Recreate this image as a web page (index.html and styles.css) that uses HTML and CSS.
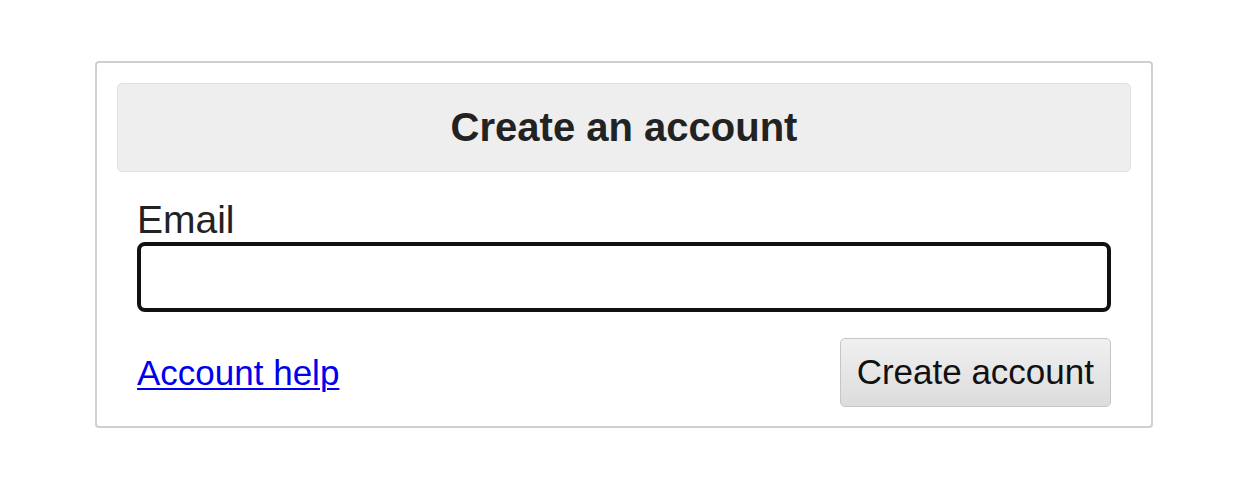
FILE: index.html
```html
<!DOCTYPE html>
<html lang="en">

<head>
    <meta charset="UTF-8">
    <meta name="viewport" content="width=device-width, initial-scale=1.0">
    <title>Create an account</title>
    <link rel="stylesheet" href="styles.css">
</head>

<body>

    <div class="signup-container">
        <h2 class="signup-title">Create an account</h2>
        <form id="signupForm" class="signup-form" action="javascript:void(0);">
            <label for="email">Email</label>
            <input type="email" id="email" name="email" required>

            <div class="form-footer">
                <a href="#" class="help-link">Account help</a>
                <button type="submit">Create account</button>
            </div>
        </form>
    </div>

</body>

</html>
```

FILE: styles.css
```css
body {
    font-family: Arial, "Liberation Sans", sans-serif;
    background-color: #fff;
    display: flex;
    justify-content: center;
    align-items: flex-start;
    margin: 0;
    padding: 61px 0 0 2px;
    color: #222;
}

.signup-container {
    width: 1058px;
    box-sizing: border-box;
    padding: 20px;
    border: 2px solid #cfcfcf;
    border-radius: 4px;
    background-color: #fff;
}

.signup-title {
    margin: 0;
    padding: 20px 20px 21px;
    background-color: #eee;
    border: 1px solid #e0e0e0;
    border-radius: 5px;
    text-align: center;
    font-size: 40px;
    line-height: 46px;
    font-weight: bold;
    color: #222;
}

.signup-form {
    display: flex;
    flex-direction: column;
    padding: 26px 20px 0;
}

label {
    font-size: 39px;
    line-height: 44px;
    color: #222;
}

input[type="email"] {
    width: 100%;
    height: 70px;
    margin: 0;
    padding: 10px;
    border: 4px solid #111;
    border-radius: 8px;
    box-sizing: border-box;
    font-size: 30px;
    outline: none;
}

.form-footer {
    display: flex;
    justify-content: space-between;
    align-items: center;
    margin-top: 26px;
    margin-bottom: -1px;
}

.help-link {
    font-size: 35px;
    line-height: 40px;
    color: #0000ee;
    text-decoration: underline;
    text-underline-offset: 3px;
    text-decoration-thickness: 2px;
}

button {
    padding: 13px 16px 14px;
    font-family: inherit;
    font-size: 35px;
    line-height: 40px;
    color: #111;
    background: linear-gradient(#f0f0f0, #dcdcdc);
    border: 1px solid #c6c6c6;
    border-radius: 5px;
    cursor: pointer;
}

button:hover {
    background: linear-gradient(#e6e6e6, #d0d0d0);
}
```
